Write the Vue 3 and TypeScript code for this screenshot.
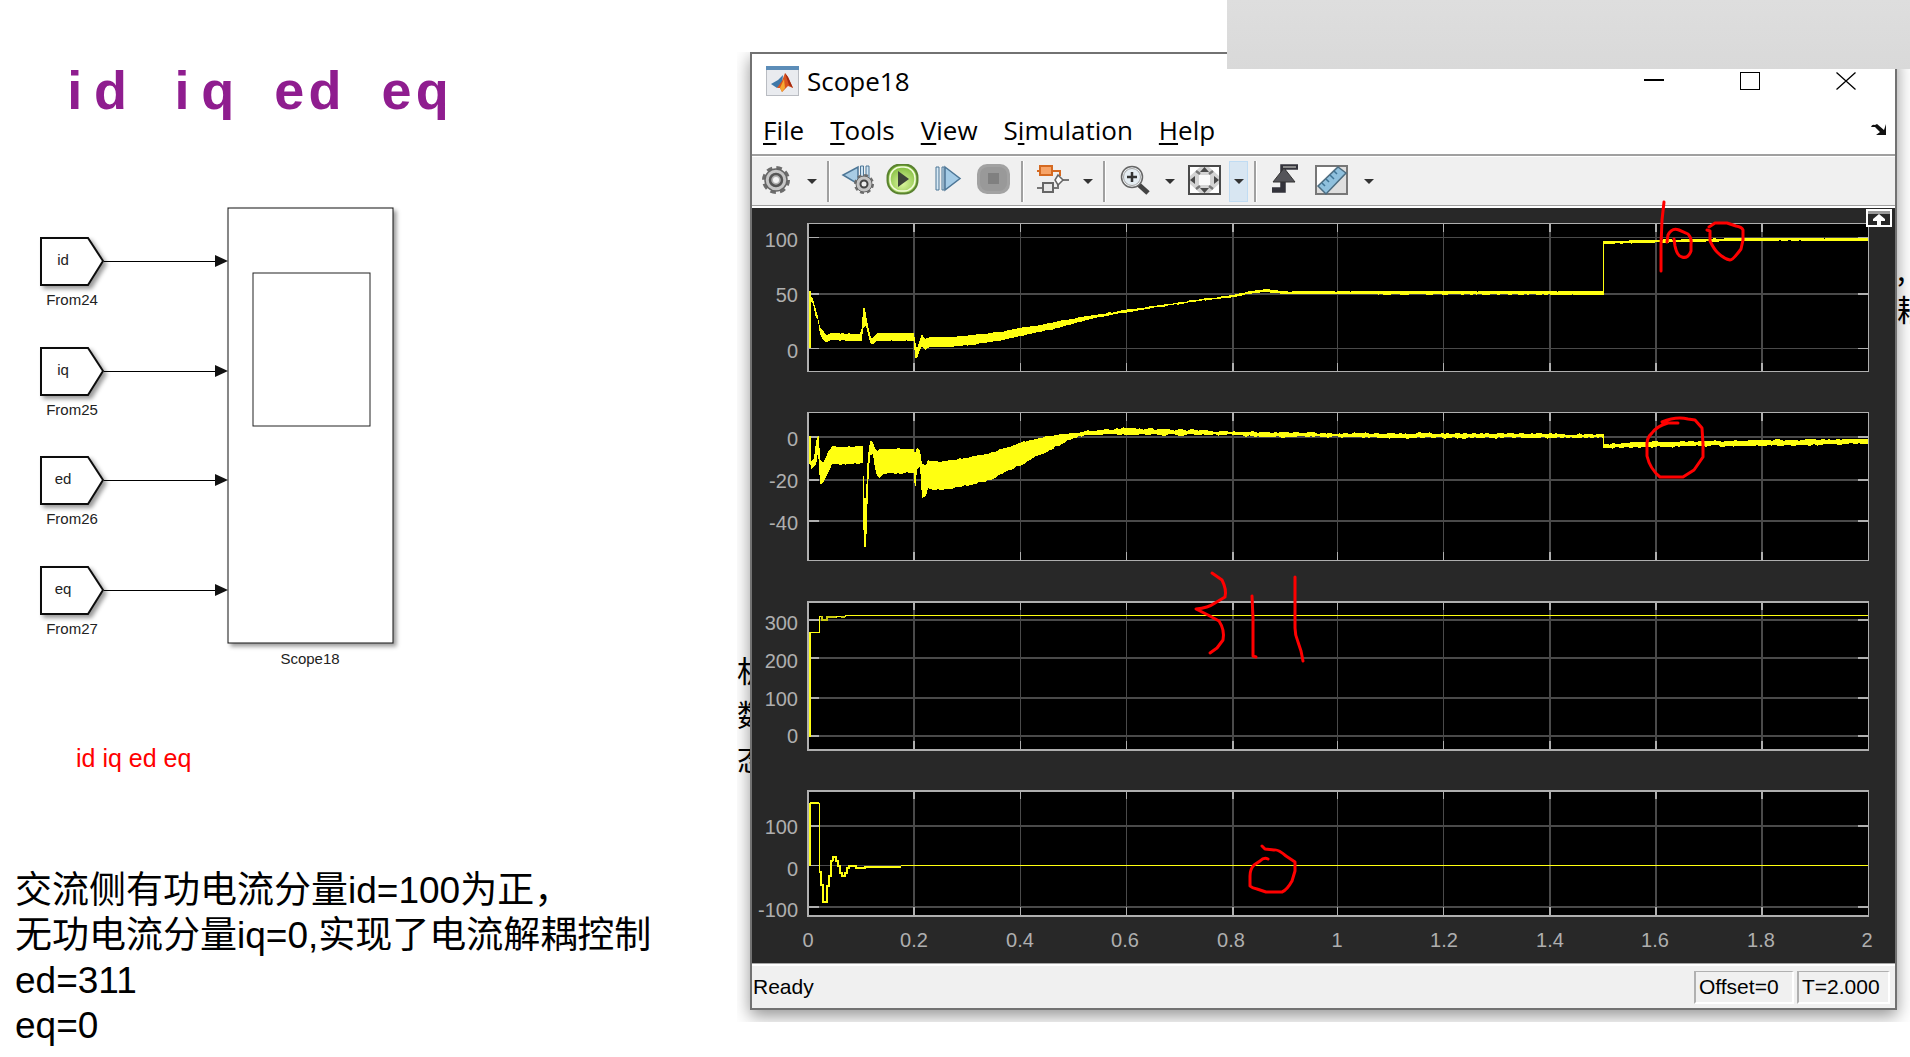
<script setup lang="ts">
interface Band { x: number; top: number; bottom: number }
interface Row { label: string; y: number; w: number; base: number }
interface Plot { top: number; bottom: number; edge: number; rows: Row[] }

const titleCells = [...'id iq ed eq']

const sources = [
  { tag: 'id', name: 'From24', y: 261 },
  { tag: 'iq', name: 'From25', y: 371 },
  { tag: 'ed', name: 'From26', y: 480 },
  { tag: 'eq', name: 'From27', y: 590 },
]

const menus = [
  { before: '', key: 'F', after: 'ile' },
  { before: '', key: 'T', after: 'ools' },
  { before: '', key: 'V', after: 'iew' },
  { before: 'S', key: 'i', after: 'mulation' },
  { before: '', key: 'H', after: 'elp' },
]

const columns = [
  { x: 913, w: 2 }, { x: 1020, w: 1 }, { x: 1126, w: 1 }, { x: 1232, w: 2 }, { x: 1337, w: 1 },
  { x: 1443, w: 1 }, { x: 1549, w: 2 }, { x: 1655, w: 2 }, { x: 1761, w: 2 },
]

const timeLabels = [
  { t: '0', x: 808 }, { t: '0.2', x: 914 }, { t: '0.4', x: 1020 }, { t: '0.6', x: 1125 },
  { t: '0.8', x: 1231 }, { t: '1', x: 1337 }, { t: '1.2', x: 1444 }, { t: '1.4', x: 1550 },
  { t: '1.6', x: 1655 }, { t: '1.8', x: 1761 }, { t: '2', x: 1867 },
]

const plots: Plot[] = [
  { top: 223, bottom: 371, edge: 1, rows: [
    { label: '100', y: 237, w: 1, base: 247 },
    { label: '50', y: 293, w: 2, base: 302 },
    { label: '0', y: 348, w: 1, base: 358 }] },
  { top: 412, bottom: 560, edge: 1, rows: [
    { label: '0', y: 436, w: 2, base: 446 },
    { label: '-20', y: 479, w: 2, base: 488 },
    { label: '-40', y: 520, w: 2, base: 530 }] },
  { top: 601, bottom: 749, edge: 2, rows: [
    { label: '300', y: 619, w: 2, base: 630 },
    { label: '200', y: 657, w: 2, base: 668 },
    { label: '100', y: 697, w: 2, base: 706 },
    { label: '0', y: 735, w: 2, base: 743 }] },
  { top: 790, bottom: 915, edge: 2, rows: [
    { label: '100', y: 825, w: 2, base: 834 },
    { label: '0', y: 865, w: 1, base: 876 },
    { label: '-100', y: 906, w: 2, base: 917 }] },
]

// Each sample is [x, upper envelope, lower envelope].
const idSamples = [
  [809, 291, 348], [811, 291, 348], [811.1, 296, 301], [813, 299, 304], [816, 310, 318], [818, 317, 320],
  [820, 328, 334], [824, 332, 341], [826, 335, 342], [831, 333, 340], [860, 334, 341], [862, 327, 341],
  [863, 308, 328], [865, 308, 326], [866, 316, 326], [869, 330, 338], [871, 338, 344], [873, 338, 344],
  [877, 333, 341], [914, 333, 341], [915, 341, 358], [917, 349, 358], [920, 340, 350], [922, 334, 346],
  [925, 339, 350], [930, 337, 347], [950, 337, 347], [970, 335, 345], [1000, 332, 341], [1020, 328, 336],
  [1050, 323, 330], [1080, 317, 322], [1100, 314, 317], [1125, 310, 313], [1160, 305, 307], [1200, 299, 301],
  [1233, 295, 297], [1250, 291, 294], [1266, 289, 292], [1285, 291, 294], [1603, 291, 295], [1603.1, 241, 295],
  [1604, 241, 295], [1604.1, 241, 244], [1650, 240, 243], [1690, 239, 242], [1740, 238, 241], [1868, 238, 241],
]
const iqSamples = [
  [809, 436, 464], [811, 436, 465], [811.1, 462, 469], [814, 458, 466], [816, 442, 465], [818, 436, 452],
  [819, 435, 465], [820, 460, 484], [823, 463, 483], [828, 452, 473], [832, 446, 464], [840, 447, 465],
  [863, 446, 463], [863.1, 458, 516], [864, 498, 547], [866, 498, 547], [867, 470, 522], [868, 456, 487],
  [870, 441, 455], [873, 442, 454], [875, 449, 468], [877, 451, 476], [880, 449, 478], [883, 449, 474],
  [914, 449, 473], [915, 454, 492], [917, 448, 470], [920, 450, 466], [922, 464, 498], [926, 466, 496],
  [928, 460, 488], [935, 461, 490], [950, 460, 489], [970, 457, 485], [990, 453, 480], [1010, 447, 470],
  [1020, 443, 466], [1030, 440, 460], [1050, 436, 450], [1070, 433, 440], [1085, 431, 435], [1105, 429, 434],
  [1125, 428, 435], [1160, 429, 435], [1200, 430, 435], [1225, 431, 435], [1260, 432, 437], [1330, 433, 437],
  [1400, 433, 438], [1603, 434, 438], [1603.1, 434, 448], [1604, 434, 448], [1604.1, 444, 448],
  [1640, 442, 448], [1700, 441, 446], [1760, 440, 446], [1868, 439, 444],
]

const noise = (n: number): number => {
  const s = Math.sin(n * 12.9898) * 43758.5453
  return s - Math.floor(s)
}

function envelope(samples: number[][], ripple: number): string {
  const pts: Band[] = []
  samples.forEach((s, i) => {
    const next = samples[i + 1]
    pts.push({ x: s[0], top: s[1], bottom: s[2] })
    if (!next) return
    for (let x = s[0] + 3; x < next[0]; x += 3) {
      const k = (x - s[0]) / (next[0] - s[0])
      pts.push({
        x,
        top: s[1] + (next[1] - s[1]) * k + (noise(x) - 0.4) * ripple,
        bottom: s[2] + (next[2] - s[2]) * k + (noise(x + 7) - 0.6) * ripple,
      })
    }
  })
  const upper = pts.map(p => `${p.x} ${p.top.toFixed(1)}`)
  const lower = pts.map(p => `${p.x} ${p.bottom.toFixed(1)}`).reverse()
  return `M${upper.concat(lower).join('L')}Z`
}

const idPath = envelope(idSamples, 1)
const iqPath = envelope(iqSamples, 2)

const strokes = [
  'M1664 202L1662 220L1661 245L1661 271',
  'M1667 242L1668 235Q1672 227 1679 230L1688 234Q1692 238 1691 244V251Q1688 259 1682 257Q1677 256 1675 246L1674 239',
  'M1707 230L1710 231V241Q1714 249 1717 252Q1724 259 1730 260Q1733 260 1741 249L1743 240V230Q1742 227 1736 226L1727 223H1715L1709 227',
  'M1678 423H1668Q1657 426 1652 433Q1646 438 1647 448V456Q1650 469 1660 477H1683L1694 470L1703 457V444L1702 428L1695 420L1688 419Q1676 416 1662 422',
  'M1212 573L1222 580Q1227 590 1225 597L1215 603Q1208 608 1196 609L1208 615L1219 621Q1225 630 1223 640L1217 648L1210 653',
  'M1252 596L1253 618V656L1256 657',
  'M1295 577V628Q1295 635 1298 642L1301 651L1303 661',
  'M1268 859Q1264 857 1260 861L1254 865Q1250 869 1250 876V886Q1252 888 1257 889L1266 892H1282Q1287 890 1292 881L1295 871V862L1286 856Q1278 849 1274 850L1265 849L1262 846',
]
</script>

<template>
  <main class="slide">
    <section class="notes">
      <h1 class="title"><span v-for="(c, i) in titleCells" :key="i">{{ c }}</span></h1>

      <svg class="diagram" viewBox="0 200 420 480" role="img" aria-label="Scope18 inputs">
        <defs>
          <filter id="drop" x="-20%" y="-20%" width="140%" height="140%">
            <feDropShadow dx="3" dy="3" stdDeviation="2" flood-color="#000" flood-opacity="0.4" />
          </filter>
        </defs>
        <rect class="block" x="228" y="208" width="165" height="435" filter="url(#drop)" />
        <rect class="screen" x="253" y="273" width="117" height="153" />
        <g v-for="s in sources" :key="s.tag">
          <path class="block" :d="`M41 ${s.y - 23}H88L103 ${s.y}L88 ${s.y + 24}H41Z`" filter="url(#drop)" />
          <path class="wire" :d="`M104 ${s.y + 0.5}H220`" />
          <path :d="`M215 ${s.y - 6}L228 ${s.y}L215 ${s.y + 6}Z`" fill="#111" />
          <text x="63" :y="s.y + 4">{{ s.tag }}</text>
          <text x="72" :y="s.y + 44">{{ s.name }}</text>
        </g>
        <text x="310" y="664">Scope18</text>
      </svg>

      <p class="caption">id iq ed eq</p>
      <p class="summary">
        交流侧有功电流分量id=100为正，<br>无功电流分量iq=0,实现了电流解耦控制<br>ed=311<br>eq=0
      </p>
    </section>

    <section class="stage">
      <div class="capture">
        <div class="behind left">机<br>数<br>态</div>
        <div class="behind right">,<br>耦</div>

        <div class="window">
          <header class="titlebar">
            <svg class="logo" viewBox="0 0 33 30">
              <rect x="0.5" y="0.5" width="32" height="29" fill="#e9ebef" stroke="#b9bcc2" />
              <rect width="33" height="4" fill="#5c8db8" />
              <path d="M5 18L12 14L17 9L16 18L11 22Z" fill="#3f78a8" />
              <path d="M11 22L16 15L19 7L22 11L27 22L22 20L16 26L14 22Z" fill="#d9541e" />
              <path d="M14 22L18 13L19 22L16 26Z" fill="#f5a830" />
              <path d="M19 7L22 11L27 22L23 19Z" fill="#a32a12" />
            </svg>
            <span class="name">Scope18</span>
            <div class="controls">
              <button aria-label="Minimize"><svg viewBox="0 0 20 18"><path d="M0 8H20" stroke="#000" stroke-width="2" /></svg></button>
              <button aria-label="Maximize"><svg viewBox="0 0 20 18"><rect x="0.5" y="0.5" width="19" height="17" fill="none" stroke="#000" /></svg></button>
              <button aria-label="Close"><svg viewBox="0 0 20 18"><path d="M0.5 0.5L19.5 17.5M19.5 0.5L0.5 17.5" stroke="#000" stroke-width="1.3" /></svg></button>
            </div>
          </header>

          <nav class="menubar">
            <button v-for="m in menus" :key="m.key">{{ m.before }}<u>{{ m.key }}</u>{{ m.after }}</button>
            <button class="dock" aria-label="Dock">
              <svg viewBox="0 0 16 11"><path d="M0 3Q1 0 4 1L6 0L13 6L15 0V11H5L9 8L4 3Z" fill="#111" /></svg>
            </button>
          </nav>

          <div class="toolbar">
            <div class="group first">
              <button class="tool" aria-label="Settings">
                <svg viewBox="0 0 34 34">
                  <circle cx="16" cy="16" r="12" fill="none" stroke="#6c6c6c" stroke-width="4" stroke-dasharray="5.4 4.02" />
                  <circle cx="16" cy="16" r="11" fill="#c6c6c6" stroke="#666" stroke-width="1.5" />
                  <circle cx="16" cy="16" r="6" fill="#b4b4b4" stroke="#555" stroke-width="2.5" />
                  <circle cx="16" cy="16" r="3" fill="#f4f4f4" />
                </svg>
              </button>
              <button class="more" aria-label="Settings options"></button>
            </div>
            <div class="group steps">
              <button class="tool" aria-label="Step back">
                <svg viewBox="0 0 34 34">
                  <path d="M17 3V20L2 11Z" fill="#a9cce4" stroke="#4d7696" stroke-width="1.5" />
                  <path d="M19.5 2H22.5V15H19.5ZM25 2H28V15H25Z" fill="#cfe4f3" stroke="#4d7696" />
                  <circle cx="23" cy="20" r="8.5" fill="none" stroke="#6c6c6c" stroke-width="3" stroke-dasharray="3.8 2.87" />
                  <circle cx="23" cy="20" r="8" fill="#c4c4c4" stroke="#666" />
                  <circle cx="23" cy="20" r="3.5" fill="#eee" stroke="#444" stroke-width="2" />
                </svg>
              </button>
              <button class="tool" aria-label="Run">
                <svg viewBox="0 0 34 34">
                  <defs>
                    <radialGradient id="go" cx="0.5" cy="0.65" r="0.6">
                      <stop offset="0" stop-color="#dcf7a0" /><stop offset="1" stop-color="#7fbb3a" />
                    </radialGradient>
                  </defs>
                  <rect x="1.5" y="0.5" width="30" height="29" rx="13" fill="url(#go)" stroke="#5a8230" stroke-width="2" />
                  <rect x="4" y="3" width="25" height="24" rx="11" fill="none" stroke="#f3fbdc" stroke-width="1.5" />
                  <path d="M12 7L23 15L12 23Z" fill="#3d4438" />
                </svg>
              </button>
              <button class="tool" aria-label="Step forward">
                <svg viewBox="0 0 34 34">
                  <path d="M5 3H8V26H5ZM11 3H13V26H11Z" fill="#d7e9f5" stroke="#4d7696" />
                  <path d="M14 3L29 14.5L14 26Z" fill="#a4cbe6" stroke="#4d7696" stroke-width="1.5" />
                </svg>
              </button>
              <button class="tool" aria-label="Stop">
                <svg viewBox="0 0 34 34">
                  <rect x="1" y="0" width="33" height="30" rx="10" fill="#a2a2a2" />
                  <rect x="4" y="3" width="27" height="24" rx="8" fill="#999" />
                  <rect x="12" y="9" width="11" height="11" fill="#808080" />
                </svg>
              </button>
            </div>
            <div class="group">
              <button class="tool" aria-label="Highlight block">
                <svg viewBox="0 0 34 34">
                  <path d="M14 24H22V19M1 24H7M27 16H33" fill="none" stroke="#777" stroke-width="2" />
                  <path d="M1 7H4M16 7H24V12" fill="none" stroke="#d56a22" stroke-width="2" />
                  <rect x="4" y="2" width="12" height="9" fill="#f7a468" stroke="#d56a22" stroke-width="2" />
                  <rect x="7" y="19" width="10" height="9" fill="#e8e8e8" stroke="#666" stroke-width="2" />
                  <path d="M22 11L27 16L22 21L19 16Z" fill="#fff" stroke="#666" stroke-width="1.5" />
                </svg>
              </button>
              <button class="more" aria-label="Highlight options"></button>
            </div>
            <div class="group">
              <button class="tool" aria-label="Zoom">
                <svg viewBox="0 0 34 34">
                  <path d="M20 20L30 29" stroke="#444" stroke-width="5" />
                  <circle cx="14" cy="13" r="10.5" fill="#f2f6f8" stroke="#666" stroke-width="1.5" />
                  <circle cx="14" cy="13" r="8.5" fill="#e5edf2" stroke="#a6a6a6" />
                  <path d="M9 13H19M14 8V18" stroke="#333" stroke-width="2.5" />
                </svg>
              </button>
              <button class="more" aria-label="Zoom options"></button>
              <button class="tool" aria-label="Scale axes">
                <svg viewBox="0 0 34 34">
                  <rect x="2" y="2" width="31" height="28" fill="#d4d4d4" stroke="#4a4a4a" stroke-width="2" />
                  <path d="M3 3H13L3 12ZM32 3H22L32 12ZM3 29H13L3 20ZM32 29H22L32 20Z" fill="#fff" />
                  <path d="M17.5 3L22 8H13ZM17.5 29L22 24H13ZM3 16L8 12V20ZM32 16L27 12V20Z" fill="#4a4a4a" />
                  <rect x="12" y="11" width="11" height="10" fill="#fafafa" />
                  <path d="M13 10L9 7M22 10L26 7M13 22L9 25M22 22L26 25" stroke="#777" stroke-width="2.5" />
                </svg>
              </button>
              <button class="more active" aria-label="Scale options"></button>
            </div>
            <div class="group last">
              <button class="tool" aria-label="Triggers">
                <svg viewBox="0 0 34 34">
                  <path d="M3 26H14V3H29" fill="none" stroke="#33333b" stroke-width="5.5" />
                  <path d="M14 3H27" stroke="#8a8a8a" stroke-width="2" />
                  <path d="M15 4L26 18H4Z" fill="#55555a" stroke="#333" />
                </svg>
              </button>
              <button class="tool" aria-label="Measurements">
                <svg viewBox="0 0 34 34">
                  <rect x="2" y="2" width="31" height="28" fill="#dedede" stroke="#777" stroke-width="2" />
                  <path d="M3 3H22L3 22Z" fill="#fff" />
                  <path d="M4 22L24 3L32 9L12 30Z" fill="#8fc0dd" stroke="#4c6c80" stroke-width="1.5" />
                  <path d="M12 15L15 18M16 11L20 15M20 7L23 10M8 19L11 22" stroke="#3f7495" stroke-width="1.5" />
                </svg>
              </button>
              <button class="more" aria-label="Measurement options"></button>
            </div>
          </div>

          <div class="canvas">
            <svg class="chart" viewBox="752 208 1143 755" role="img" aria-label="Scope traces">
              <g v-for="(p, i) in plots" :key="i">
                <rect x="807" :y="p.top" width="1062" :height="p.bottom - p.top" fill="#000" />
                <g fill="#4a4a4a">
                  <rect v-for="c in columns" :key="c.x" :x="c.x" :y="p.top" :width="c.w" :height="p.bottom - p.top" />
                  <rect v-for="r in p.rows" :key="r.y" x="807" :y="r.y" width="1062" :height="r.w" />
                </g>
                <g fill="#afafaf">
                  <template v-for="c in columns" :key="c.x">
                    <rect :x="c.x" :y="p.top" :width="c.w" height="9" />
                    <rect :x="c.x" :y="p.bottom - 8" :width="c.w" height="9" />
                  </template>
                  <template v-for="r in p.rows" :key="r.y">
                    <rect x="807" :y="r.y" width="12" :height="r.w" />
                    <rect x="1858" :y="r.y" width="11" :height="r.w" />
                  </template>
                  <rect x="807" :y="p.top" width="1062" :height="p.edge" />
                  <rect x="807" :y="p.bottom" width="1062" :height="p.edge" />
                  <rect x="807" :y="p.top" width="2" :height="p.bottom - p.top" />
                  <rect x="1868" :y="p.top" width="1" :height="p.bottom - p.top" />
                  <text v-for="r in p.rows" :key="r.y" x="798" :y="r.base" text-anchor="end">{{ r.label }}</text>
                </g>
              </g>
              <g fill="#afafaf" text-anchor="middle">
                <text v-for="l in timeLabels" :key="l.t" :x="l.x" y="947">{{ l.t }}</text>
              </g>

              <g shape-rendering="crispEdges">
                <path :d="idPath" fill="#ff1" />
                <path :d="iqPath" fill="#ff1" />
              </g>
              <g fill="none" stroke="#ff1" shape-rendering="crispEdges">
                <path d="M810 737V632" stroke-width="2" />
                <path d="M810 632.5H819.5V616.5H822V620.5H827V617.5H836V616.5H845V615.5H1868" />
                <path d="M822 616V620H827V617H836M841 617H845" stroke="#cc1" stroke-width="2" />
                <path d="M810 866V803" stroke-width="2" />
                <path d="M810 803H819" stroke-width="2" />
                <path d="M819.5 803V872H821V885H823V902H827V886H829V876H831V861H833" stroke-width="1.5" />
                <path d="M833 861V857H836V861H838V866H840V873H842V876H845V873H847V868H849V866H856V868H865V867H901" stroke-width="1.5" />
                <path d="M901 865.5H1868" />
              </g>
              <g class="ink">
                <path v-for="s in strokes" :key="s" :d="s" />
              </g>
            </svg>
            <button class="expand" aria-label="Hide toolbar">
              <svg viewBox="0 0 26 18">
                <rect x="1" y="1" width="24" height="16" fill="#282828" stroke="#fff" stroke-width="2" />
                <rect x="2" y="2" width="22" height="3" fill="#9a9a9a" />
                <path d="M13 5L19 10V12H15V16H11V12H7V10Z" fill="#fff" />
              </svg>
            </button>
          </div>

          <footer class="status">
            <span class="ready">Ready</span>
            <span class="cell">Offset=0</span>
            <span class="cell time">T=2.000</span>
          </footer>
        </div>
      </div>
      <div class="banner"></div>
    </section>
  </main>
</template>

<style>
body { margin: 0; background: #fff; }
</style>

<style scoped>
.slide {
  display: grid;
  grid-template-columns: 737px 1fr;
  position: relative;
  overflow: hidden;
  font-family: "Liberation Sans", "Noto Sans CJK SC", sans-serif;
  color: #000;
}
button { padding: 0; border: 0; background: none; color: inherit; font: inherit; }
svg { display: block; }

.notes { padding-top: 60px; }
.title {
  display: grid;
  grid-template-columns: repeat(11, 1fr);
  justify-items: center;
  width: 393px;
  margin: 0;
  padding-left: 57px;
  font-size: 54px;
  line-height: 60px;
  color: #8f1d8f;
}
.title span { white-space: pre; }
.diagram { width: 420px; margin-top: 80px; }
.diagram text { font-size: 15px; text-anchor: middle; fill: #222; }
.block { fill: #fff; stroke: #111; stroke-width: 2; }
rect.block { stroke-width: 1; }
.screen { fill: #fff; stroke: #222; }
.wire { stroke: #000; }
.caption {
  margin: 64px 0 0 76px;
  font-size: 25px;
  line-height: 28px;
  color: #f00;
}
.summary {
  margin: 96px 0 0 15px;
  font-size: 37px;
  line-height: 45px;
  white-space: nowrap;
}

.stage { min-width: 0; }
.capture {
  position: relative;
  margin-top: 52px;
  padding: 0 13px 12px;
  overflow: hidden;
}
.window {
  position: relative;
  border: 2px solid #727272;
  background: #fff;
  box-shadow: 0 6px 16px rgba(0, 0, 0, 0.42);
}
.banner {
  position: absolute;
  top: 0;
  right: 0;
  width: 683px;
  height: 69px;
  background: linear-gradient(#dedede, #d9d9d9);
}
.behind {
  position: absolute;
  font-family: "Noto Sans CJK SC", sans-serif;
  font-size: 30px;
  line-height: 44px;
}
.left { top: 595px; left: 0; }
.right { top: 196px; right: -17px; line-height: 40px; }

.titlebar {
  display: flex;
  align-items: center;
  height: 53px;
  padding: 0 39px 0 14px;
  font: 26px/34px "Open Sans", "Noto Sans", sans-serif;
}
.logo { width: 33px; }
.name { margin-left: 8px; }
.controls { display: flex; gap: 76px; margin-left: auto; }
.controls svg { width: 20px; height: 18px; }

.menubar {
  display: flex;
  align-items: center;
  gap: 26px;
  height: 45px;
  padding: 0 8px 2px 11px;
  border-bottom: 2px solid #a0a0a0;
  font: 26px/34px "Open Sans", "Noto Sans", sans-serif;
}
.menubar u { text-decoration-thickness: 2px; text-underline-offset: 3px; text-decoration-skip-ink: none; }
.dock { margin-left: auto; }
.dock svg { width: 16px; }

.toolbar {
  display: flex;
  align-items: center;
  height: 48px;
  border-top: 1px solid #fff;
  border-bottom: 1px solid #a0a0a0;
  background: #f0f0f0;
}
.group {
  display: flex;
  align-items: center;
  gap: 8px;
  height: 41px;
  padding: 0 6px 0 13px;
  border-right: 2px solid #a0a0a0;
  box-shadow: 1px 0 #fff;
}
.first { padding-left: 8px; }
.steps { gap: 11px; padding: 0 11px 0 12px; }
.last { gap: 11px; border: 0; box-shadow: none; }
.tool { width: 34px; height: 34px; }
.more {
  display: flex;
  align-items: center;
  justify-content: center;
  width: 19px;
  height: 41px;
}
.more::before {
  content: "";
  border: 5px solid transparent;
  border-top: 5px solid #333;
  border-bottom: 0;
}
.active { background: #d8e6f2; outline: 1px solid #c0dcf3; outline-offset: -1px; }

.canvas { position: relative; border-top: 2px solid #fff; background: #282828; }
.chart { width: 100%; overflow: visible; }
.chart text { font-size: 20px; }
.ink path {
  fill: none;
  stroke: #f00;
  stroke-width: 3;
  stroke-linecap: round;
  stroke-linejoin: round;
}
.expand { position: absolute; top: 1px; right: 3px; }
.expand svg { width: 26px; height: 18px; }

.status {
  display: flex;
  align-items: center;
  gap: 3px;
  height: 42px;
  padding: 2px 5px 0 1px;
  border-top: 1px solid #a8a8a8;
  box-shadow: inset 0 2px #fff;
  background: #f0f0f0;
  font-size: 21px;
  line-height: 30px;
}
.ready { margin-right: auto; }
.cell {
  box-sizing: border-box;
  width: 100px;
  padding: 0 3px;
  border: 2px solid #b0b0b0;
  border-right-color: #fff;
  border-bottom-color: #fff;
  border-top-width: 1px;
}
.time { width: 93px; }
</style>
